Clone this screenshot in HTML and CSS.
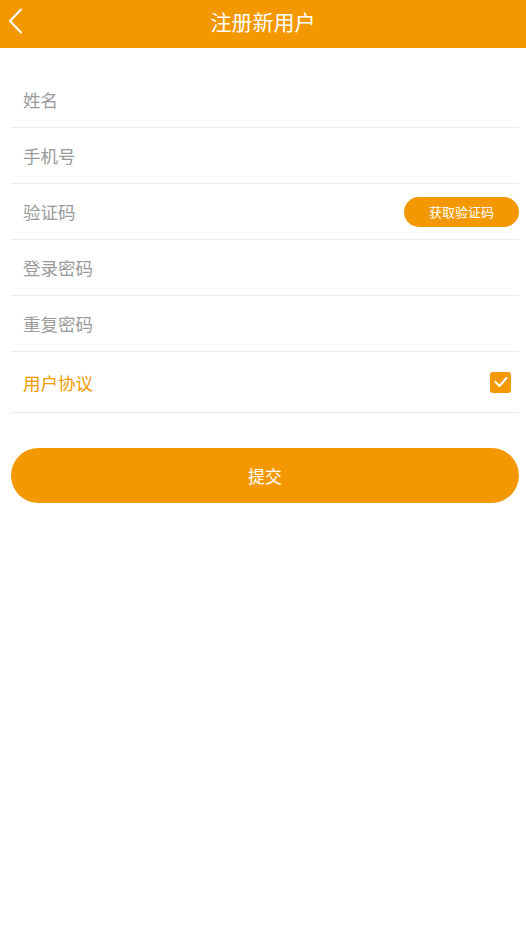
FILE: index.html
```html
<!DOCTYPE html>
<html lang="zh-CN">
<head>
  <meta charset="UTF-8">
  <meta name="viewport" content="width=device-width, initial-scale=1.0">
  <title>注册新用户</title>
  <link rel="stylesheet" href="styles.css">
</head>
<body>
  <header class="topbar">
    <a class="back" href="#">
      <svg width="16" height="26" viewBox="0 0 16 26">
        <polyline points="13,1.5 2,13 13,24.5" fill="none" stroke="#fff" stroke-width="2" stroke-linecap="round" stroke-linejoin="round"/>
      </svg>
    </a>
    <h1>注册新用户</h1>
  </header>

  <main class="form">
    <div class="row"><input type="text" placeholder="姓名"></div>
    <div class="row"><input type="tel" placeholder="手机号"></div>
    <div class="row">
      <input type="text" placeholder="验证码">
      <button class="code-btn">获取验证码</button>
    </div>
    <div class="row"><input type="password" placeholder="登录密码"></div>
    <div class="row"><input type="password" placeholder="重复密码"></div>
    <div class="row agree">
      <span class="agree-text">用户协议</span>
      <span class="check">
        <svg width="14" height="12" viewBox="0 0 14 12">
          <polyline points="1.5,6 5.5,10 12.5,2" fill="none" stroke="#fff" stroke-width="2.2" stroke-linecap="round" stroke-linejoin="round"/>
        </svg>
      </span>
    </div>

    <button class="submit">提交</button>
  </main>
</body>
</html>
```

FILE: styles.css
```css
body {
  margin: 0;
  font-family: "Noto Sans CJK SC", "Noto Sans", sans-serif;
  background: #fff;
  color: #999;
}
.topbar {
  height: 48px;
  background: #f39800;
  display: flex;
  align-items: center;
  justify-content: center;
  position: relative;
}
.topbar h1 {
  margin: 0 0 6px;
  font-size: 21px;
  font-weight: normal;
  color: #fff;
}
.back {
  position: absolute;
  left: 8px;
  top: 8px;
  display: flex;
}
.form {
  padding: 24px 7px 0 11px;
}
.row {
  height: 55px;
  border-bottom: 1px solid #ececec;
  display: flex;
  align-items: center;
  padding: 0 0 0 12px;
}
.row input {
  flex: 1;
  border: none;
  outline: none;
  font-family: inherit;
  font-size: 17.5px;
  color: #333;
  padding: 0;
  background: transparent;
}
.row input::placeholder {
  color: #9a9a9a;
}
.code-btn {
  width: 115px;
  height: 30px;
  border: none;
  border-radius: 15px;
  background: #f39800;
  color: #fff;
  font-family: inherit;
  font-size: 13px;
  padding: 0;
}
.agree {
  height: 60px;
  justify-content: space-between;
  padding-right: 8px;
}
.agree-text {
  font-size: 17.5px;
  color: #f39800;
}
.check {
  width: 21px;
  height: 21px;
  border-radius: 3px;
  background: #f39800;
  display: flex;
  align-items: center;
  justify-content: center;
}
.submit {
  display: block;
  width: 100%;
  height: 55px;
  margin-top: 35px;
  border: none;
  border-radius: 28px;
  background: #f39800;
  color: #fff;
  font-family: inherit;
  font-size: 17px;
}
```
